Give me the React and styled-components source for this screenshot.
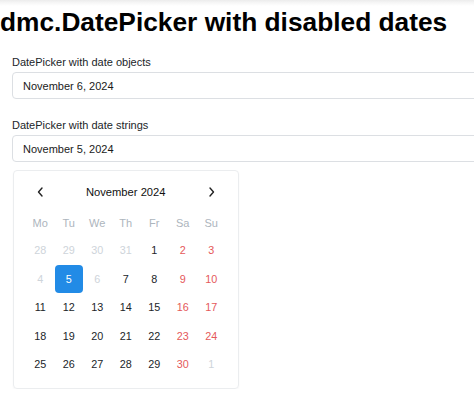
import React from "react";
import styled, { createGlobalStyle } from "styled-components";

const Global = createGlobalStyle`
  html, body { margin: 0; padding: 0; background: #fff; overflow: hidden; }
  body {
    font-family: "Liberation Sans", Arial, sans-serif;
    color: #000;
    background: linear-gradient(#ececec 0px, #f7f7f7 3px, #fff 6px) no-repeat;
  }
`;

const Page = styled.div`
  width: 540px;
  padding: 0 12px;
  display: flex;
  flex-direction: column;
`;

const Title = styled.h1`
  margin: 6px 0 0 -12px;
  font-size: 26.3px;
  line-height: 33px;
  font-weight: 700;
  white-space: nowrap;
`;

const Field = styled.div`
  display: flex;
  flex-direction: column;
  gap: 2px;
  margin-top: ${(p) => p.$top}px;
`;

const Label = styled.label`
  font-size: 11px;
  line-height: 16px;
  color: #212529;
`;

const Input = styled.div`
  height: 27px;
  box-sizing: border-box;
  border: 1px solid #dcdfe3;
  border-radius: 4px;
  padding: 0 10px;
  display: flex;
  align-items: center;
  font-size: 11px;
  color: #1a1a1a;
`;

const Calendar = styled.div`
  margin: 8px 0 0 1px;
  width: 225.5px;
  box-sizing: border-box;
  border: 1px solid #ebedef;
  border-radius: 4px;
  box-shadow: 0 1px 2px rgba(0, 0, 0, 0.04);
  padding: 7px 12px 9px;
`;

const Header = styled.div`
  display: flex;
  align-items: center;
  height: 28px;
`;

const NavButton = styled.div`
  width: 28.5px;
  height: 28px;
  display: flex;
  align-items: center;
  justify-content: center;
`;

const MonthLabel = styled.div`
  flex: 1;
  text-align: center;
  font-size: 11.2px;
  color: #111;
`;

const Grid = styled.div`
  display: grid;
  grid-template-columns: repeat(7, 28.5px);
`;

const WeekdayRow = styled(Grid)`
  margin-top: 4px;
  height: 26px;
  align-items: center;
`;

const Weekday = styled.div`
  text-align: center;
  font-size: 11px;
  color: #adb5bd;
`;

const DaysGrid = styled(Grid)`
  grid-auto-rows: 28.5px;
`;

const Day = styled.div`
  display: flex;
  align-items: center;
  justify-content: center;
  font-size: 10.8px;
  color: ${(p) =>
    p.$selected ? "#fff" : p.$muted ? "#ced4da" : p.$weekend ? "#e5585a" : "#212529"};
  background: ${(p) => (p.$selected ? "#228be6" : "transparent")};
  border-radius: 4px;
  ${(p) => (p.$selected ? "width: 28px; height: 28px; margin: auto;" : "")}
`;

const Chevron = ({ dir }) => (
  <svg width="9" height="10" viewBox="0 0 9 10" fill="none">
    <polyline
      points={dir === "left" ? "6,1 2.5,5 6,9" : "3,1 6.5,5 3,9"}
      stroke="#222"
      strokeWidth="1.4"
      strokeLinecap="round"
      strokeLinejoin="round"
    />
  </svg>
);

const weekdays = ["Mo", "Tu", "We", "Th", "Fr", "Sa", "Su"];

const days = [
  [28, "out"], [29, "out"], [30, "out"], [31, "out"], [1], [2], [3],
  [4, "dis"], [5, "sel"], [6, "dis"], [7], [8], [9], [10],
  [11], [12], [13], [14], [15], [16], [17],
  [18], [19], [20], [21], [22], [23], [24],
  [25], [26], [27], [28], [29], [30], [1, "out"],
];

export default function App() {
  return (
    <>
      <Global />
      <Page>
        <Title>dmc.DatePicker with disabled dates</Title>
        <Field $top={15}>
          <Label>DatePicker with date objects</Label>
          <Input>November 6, 2024</Input>
        </Field>
        <Field $top={18}>
          <Label>DatePicker with date strings</Label>
          <Input>November 5, 2024</Input>
        </Field>
        <Calendar>
          <Header>
            <NavButton>
              <Chevron dir="left" />
            </NavButton>
            <MonthLabel>November 2024</MonthLabel>
            <NavButton>
              <Chevron dir="right" />
            </NavButton>
          </Header>
          <WeekdayRow>
            {weekdays.map((w) => (
              <Weekday key={w}>{w}</Weekday>
            ))}
          </WeekdayRow>
          <DaysGrid>
            {days.map(([n, kind], i) => (
              <Day
                key={i}
                $muted={kind === "out" || kind === "dis"}
                $selected={kind === "sel"}
                $weekend={i % 7 >= 5}
              >
                {n}
              </Day>
            ))}
          </DaysGrid>
        </Calendar>
      </Page>
    </>
  );
}
